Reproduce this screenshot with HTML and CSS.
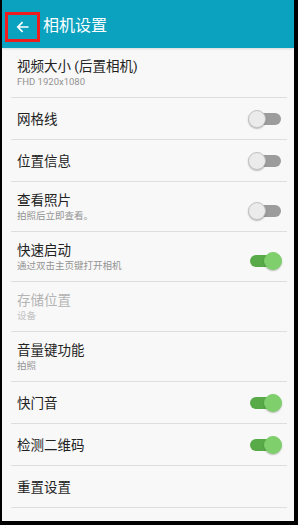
FILE: index.html
```html
<!DOCTYPE html>
<html lang="zh">
<head>
<meta charset="utf-8">
<title>相机设置</title>
<link rel="stylesheet" href="styles.css">
</head>
<body>
<div class="screen">
  <header class="appbar">
    <button class="back" aria-label="返回">
      <svg width="13" height="12" viewBox="0 0 13 12"><path d="M12.5 6H1.8M6.6 1.2L1.8 6l4.8 4.8" fill="none" stroke="#fff" stroke-width="1.7"/></svg>
    </button>
    <h1 class="appbar-title">相机设置</h1>
  </header>
  <ul class="list">
    <li class="item two"><div class="text"><div class="title">视频大小 (后置相机)</div><div class="sub">FHD 1920x1080</div></div></li>
    <li class="item"><div class="text"><div class="title">网格线</div></div><span class="switch"></span></li>
    <li class="item"><div class="text"><div class="title">位置信息</div></div><span class="switch"></span></li>
    <li class="item two"><div class="text"><div class="title">查看照片</div><div class="sub">拍照后立即查看。</div></div><span class="switch"></span></li>
    <li class="item two"><div class="text"><div class="title">快速启动</div><div class="sub">通过双击主页键打开相机</div></div><span class="switch on"></span></li>
    <li class="item two disabled"><div class="text"><div class="title">存储位置</div><div class="sub">设备</div></div></li>
    <li class="item two"><div class="text"><div class="title">音量键功能</div><div class="sub">拍照</div></div></li>
    <li class="item"><div class="text"><div class="title">快门音</div></div><span class="switch on"></span></li>
    <li class="item"><div class="text"><div class="title">检测二维码</div></div><span class="switch on"></span></li>
    <li class="item"><div class="text"><div class="title">重置设置</div></div></li>
  </ul>
</div>
</body>
</html>
```
FILE: styles.css
```css
html, body {
  margin: 0;
  padding: 0;
  background: #000;
}
body {
  font-family: Roboto, "Noto Sans CJK SC", sans-serif;
}
.screen {
  width: 292px;
  height: 521px;
  margin: 0 4px 4px 2px;
  background: #f8f8f8;
  overflow: hidden;
}
.appbar {
  height: 48px;
  background: #0ba2c0;
  display: flex;
  align-items: center;
  box-shadow: 0 1px 2px rgba(0,0,0,0.12);
}
.back {
  box-sizing: border-box;
  width: 35px;
  height: 30px;
  margin: 6px 0 0 3px;
  padding: 0;
  border: 3px solid #ee1c1c;
  background: transparent;
  display: flex;
  align-items: center;
  justify-content: center;
}
.back svg {
  display: block;
  margin-left: -1px;
}
.appbar-title {
  margin: 3px 0 0 3px;
  font-size: 16px;
  font-weight: normal;
  color: #fff;
  line-height: 20px;
}
.list {
  list-style: none;
  margin: 0;
  padding: 0;
}
.item {
  box-sizing: border-box;
  height: 42px;
  margin: 0 7px 0 9px;
  padding: 0 4px 0 6px;
  border-bottom: 1px solid #dedede;
  display: flex;
  align-items: center;
  justify-content: space-between;
}
.item.two {
  height: 50px;
  align-items: flex-start;
  padding-top: 9px;
}
.item.two .switch {
  margin-top: 11px;
}
.title {
  font-size: 13.5px;
  line-height: 18px;
  color: #222;
}
.sub {
  font-size: 9.5px;
  line-height: 12px;
  margin-top: 1px;
  color: #939393;
}
.disabled .title {
  color: #b4b4b4;
}
.disabled .sub {
  color: #c4c4c4;
}
.switch {
  position: relative;
  width: 35px;
  height: 18px;
  flex: none;
}
.switch::before {
  content: "";
  position: absolute;
  left: 2px;
  top: 3px;
  width: 31px;
  height: 12px;
  border-radius: 6px;
  background: #9c9c9c;
}
.switch::after {
  content: "";
  position: absolute;
  left: 0;
  top: 0;
  box-sizing: border-box;
  width: 18px;
  height: 18px;
  border-radius: 50%;
  background: #ebebeb;
  border: 1px solid #c2c2c2;
  box-shadow: 0 1px 1.5px rgba(0,0,0,0.25);
}
.switch.on::before {
  background: #58a948;
}
.switch.on::after {
  left: 16px;
  background: #7fcf6c;
  border-color: #7fcf6c;
}
```
